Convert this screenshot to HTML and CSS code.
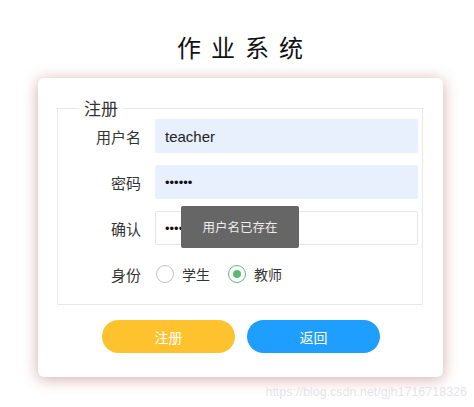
FILE: index.html
```html
<!DOCTYPE html>
<html lang="zh-CN">
<head>
<meta charset="utf-8">
<title>作业系统</title>
<link rel="stylesheet" href="styles.css">
</head>
<body>
<h1 class="title">作业系统</h1>
<div class="card">
  <fieldset class="box">
    <legend class="legend">注册</legend>
    <div class="row">
      <label class="label">用户名</label>
      <input class="input filled" type="text" value="teacher">
    </div>
    <div class="row">
      <label class="label">密码</label>
      <input class="input filled pwd" type="password" value="123456">
    </div>
    <div class="row">
      <label class="label">确认</label>
      <input class="input pwd" type="password" value="123456">
    </div>
    <div class="row">
      <label class="label">身份</label>
      <div class="radios">
        <span class="radio"><span class="circle"></span><span class="rtext">学生</span></span>
        <span class="radio checked"><span class="circle"><span class="dot"></span></span><span class="rtext">教师</span></span>
      </div>
    </div>
  </fieldset>
  <div class="actions">
    <button class="btn btn-yellow">注册</button>
    <button class="btn btn-blue">返回</button>
  </div>
</div>
<div class="toast">用户名已存在</div>
<div class="watermark">https://blog.csdn.net/gjh1716718326</div>
</body>
</html>
```
FILE: styles.css
```css
html, body {
  margin: 0;
  padding: 0;
  background: #fff;
}
body {
  width: 474px;
  height: 407px;
  position: relative;
  overflow: hidden;
  font-family: "Liberation Sans", "Noto Sans CJK SC", sans-serif;
  color: #333;
}
.title {
  margin: 0;
  padding: 32px 0 0 16px;
  box-sizing: border-box;
  height: 78px;
  text-align: center;
  font-family: "Noto Sans CJK SC", sans-serif;
  font-weight: 400;
  font-size: 24px;
  line-height: 30px;
  letter-spacing: 10px;
  color: #111;
}
.card {
  margin-left: 38px;
  width: 405px;
  height: 299px;
  box-sizing: border-box;
  background: #fff;
  border-radius: 6px;
  padding: 20px 20px 0 19px;
  box-shadow: 0 2px 15px rgba(150, 55, 55, 0.42);
}
.box {
  margin: 0;
  padding: 1px 4px 13px 0;
  border: 1px solid #e8e8e8;
  min-width: 0;
}
.legend {
  margin-left: 21px;
  padding: 0 5px;
  font-family: "Noto Sans CJK SC", sans-serif;
  font-size: 17px;
  line-height: 20px;
  color: #333;
}
.row {
  display: flex;
  align-items: center;
  height: 34px;
  margin-bottom: 12px;
}
.row:last-child {
  margin-bottom: 0;
}
.label {
  width: 83px;
  padding-right: 14px;
  text-align: right;
  font-family: "Noto Sans CJK SC", sans-serif;
  font-size: 15px;
  color: #333;
  flex: none;
}
.input {
  flex: 1;
  height: 34px;
  box-sizing: border-box;
  border: 1px solid #e6e6e6;
  border-radius: 2px;
  padding: 0 9px;
  font-family: "Liberation Sans", "Noto Sans CJK SC", sans-serif;
  font-size: 15px;
  color: #222;
  background: #fff;
  outline: none;
}
.pwd {
  font-size: 13px;
  color: #111;
}
.filled {
  background: #e8f0fe;
  border-color: #e8f0fe;
}
.radios {
  display: flex;
  align-items: center;
  padding-left: 1px;
}
.radio {
  display: flex;
  align-items: center;
  margin-right: 18px;
}
.circle {
  width: 16px;
  height: 16px;
  border: 1px solid #c2c2c2;
  border-radius: 50%;
  display: flex;
  align-items: center;
  justify-content: center;
}
.checked .circle {
  border-color: #5fb878;
}
.dot {
  width: 8px;
  height: 8px;
  border-radius: 50%;
  background: #5fb878;
}
.rtext {
  margin-left: 8px;
  font-family: "Noto Sans CJK SC", sans-serif;
  font-size: 14px;
  color: #333;
}
.actions {
  display: flex;
  justify-content: center;
  gap: 12px;
  margin-top: 15px;
  padding-left: 2px;
}
.btn {
  width: 133px;
  height: 33px;
  border: none;
  border-radius: 17px;
  color: #fff;
  font-family: "Noto Sans CJK SC", sans-serif;
  font-size: 14px;
  padding: 0;
}
.btn-yellow {
  background: #ffc22f;
}
.btn-blue {
  background: #1e9fff;
}
.toast {
  position: absolute;
  left: 181px;
  top: 206px;
  width: 118px;
  height: 42px;
  line-height: 42px;
  text-align: center;
  background: #666;
  border-radius: 2px;
  color: #eee;
  font-family: "Noto Sans CJK SC", sans-serif;
  font-size: 12.5px;
}
.watermark {
  position: absolute;
  right: 7px;
  top: 385px;
  font-family: "Liberation Sans", sans-serif;
  font-size: 12.5px;
  color: rgba(190, 190, 200, 0.45);
  text-shadow: 0 0 1px #fff;
}
```
